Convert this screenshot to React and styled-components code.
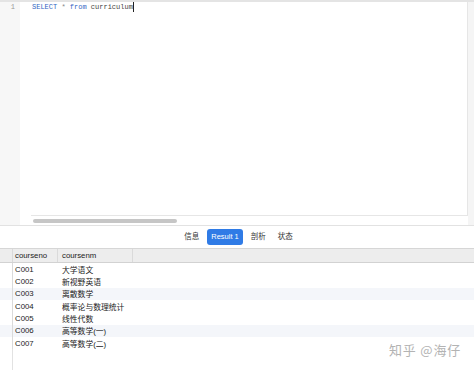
import React from "react";
import styled, { createGlobalStyle } from "styled-components";

const Global = createGlobalStyle`
  html, body { margin: 0; padding: 0; background: #fff; }
  body { font-family: "Liberation Sans", "Noto Sans CJK SC", sans-serif; }
`;

const Page = styled.div`
  position: relative;
  width: 474px;
  height: 370px;
  overflow: hidden;
  display: flex;
  flex-direction: column;
  background: #fff;
`;

const EditorPane = styled.div`
  height: 225px;
  display: flex;
  border-top: 2px solid #e4e4e4;
  box-sizing: border-box;
`;

const Gutter = styled.div`
  width: 20px;
  background: #f7f7f7;
  box-sizing: border-box;
  font-family: "Liberation Mono", monospace;
  font-size: 7px;
  color: #999;
  text-align: right;
  padding: 0 5px 0 0;
  line-height: 10px;
`;

const EditorMain = styled.div`
  flex: 1;
  display: flex;
  flex-direction: column;
  padding-left: 11px;
`;

const CodeArea = styled.div`
  flex: 1;
  border-right: 1px solid #e6e6e6;
  border-bottom: 1px solid #e6e6e6;
  font-family: "Liberation Mono", monospace;
  font-size: 7px;
  line-height: 10px;
  padding: 0 0 0 1px;
  color: #444;
`;

const Kw = styled.span`
  color: #3566c4;
`;

const Op = styled.span`
  color: #888;
`;

const Caret = styled.span`
  display: inline-block;
  width: 1px;
  height: 10px;
  background: #222;
  vertical-align: top;
`;

const HScroll = styled.div`
  height: 9px;
  display: flex;
  align-items: center;
  padding-left: 2px;
`;

const Thumb = styled.div`
  width: 144px;
  height: 4px;
  border-radius: 2px;
  background: #c6c6c6;
`;

const RightStrip = styled.div`
  width: 6px;
  background: #f5f5f5;
`;

const TabBar = styled.div`
  height: 23px;
  border-top: 1px solid #e2e2e2;
  display: flex;
  align-items: center;
  justify-content: center;
  gap: 4px;
  box-sizing: border-box;
  padding-left: 3px;
`;

const Tab = styled.div`
  font-size: 7.5px;
  height: 16px;
  line-height: 16px;
  padding: 0 4px;
  border-radius: 3px;
  color: ${(p) => (p.$active ? "#fff" : "#333")};
  background: ${(p) => (p.$active ? "#2f7be6" : "transparent")};
`;

const Table = styled.div`
  flex: 1;
  display: flex;
  flex-direction: column;
  position: relative;
`;

const HeaderRow = styled.div`
  height: 15px;
  display: flex;
  background: #ededed;
  border-top: 1px solid #d6d6d6;
  border-bottom: 1px solid #d2d2d2;
  box-sizing: border-box;
`;

const Row = styled.div`
  height: 12.33px;
  display: flex;
  background: ${(p) => (p.$striped ? "#f4f6fa" : "transparent")};
`;

const Cell = styled.div`
  width: ${(p) => p.$w}px;
  flex: ${(p) => (p.$grow ? 1 : "none")};
  box-sizing: border-box;
  padding-left: ${(p) => p.$pad || 0}px;
  border-right: ${(p) => (p.$line ? "1px solid #dadada" : "none")};
  font-size: 7.8px;
  color: #222;
  display: flex;
  align-items: center;
  white-space: nowrap;
`;

const Filler = styled.div`
  flex: 1;
  display: flex;
`;

const FillerCol = styled.div`
  width: 13px;
  border-right: 1px solid #e2e2e2;
  box-sizing: border-box;
`;

const Watermark = styled.div`
  position: absolute;
  right: 13px;
  bottom: 11px;
  font-size: 13px;
  letter-spacing: 0.8px;
  color: #b3b3b3;
  text-shadow: 0 0 2px #fff;
  font-family: "Noto Sans CJK SC", sans-serif;
`;

const rows = [
  ["C001", "大学语文"],
  ["C002", "新视野英语"],
  ["C003", "离散数学"],
  ["C004", "概率论与数理统计"],
  ["C005", "线性代数"],
  ["C006", "高等数学(一)"],
  ["C007", "高等数学(二)"],
];

export default function App() {
  return (
    <Page>
      <Global />
      <EditorPane>
        <Gutter>1</Gutter>
        <EditorMain>
          <CodeArea>
            <Kw>SELECT</Kw> <Op>*</Op> <Kw>from</Kw> curriculum
            <Caret />
          </CodeArea>
          <HScroll>
            <Thumb />
          </HScroll>
        </EditorMain>
        <RightStrip />
      </EditorPane>
      <TabBar>
        <Tab>信息</Tab>
        <Tab $active>Result 1</Tab>
        <Tab>剖析</Tab>
        <Tab>状态</Tab>
      </TabBar>
      <Table>
        <HeaderRow>
          <Cell $w={13} $line />
          <Cell $w={45} $pad={2} $line>courseno</Cell>
          <Cell $w={75} $pad={4} $line>coursenm</Cell>
          <Cell $grow />
        </HeaderRow>
        {rows.map(([no, nm], i) => (
          <Row key={no} $striped={i === 2 || i === 5}>
            <Cell $w={13} $line />
            <Cell $w={45} $pad={2}>{no}</Cell>
            <Cell $w={75} $pad={4}>{nm}</Cell>
            <Cell $grow />
          </Row>
        ))}
        <Filler>
          <FillerCol />
        </Filler>
        <Watermark>知乎 @海仔</Watermark>
      </Table>
    </Page>
  );
}
